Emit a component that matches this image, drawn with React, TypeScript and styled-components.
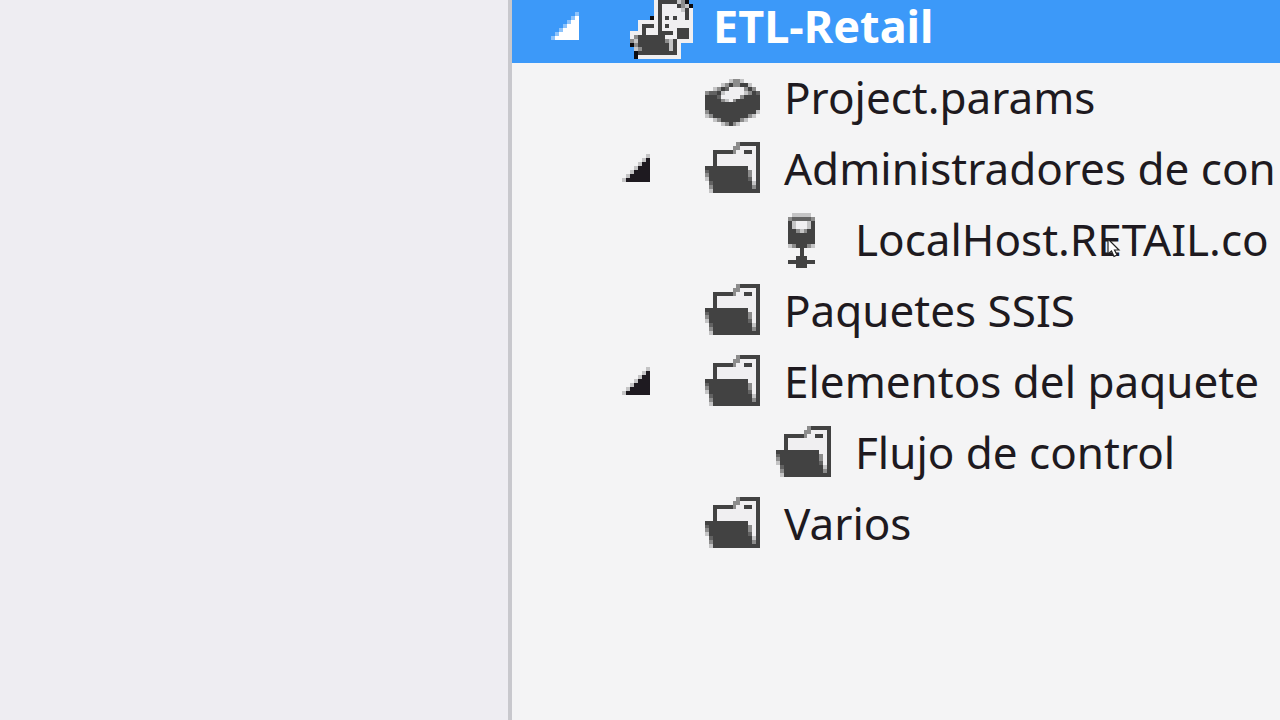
import React from 'react';
import styled, { createGlobalStyle } from 'styled-components';

const GlobalStyle = createGlobalStyle`
  * { box-sizing: border-box; }
  body { margin: 0; background: #f4f4f5; }
`;

const Shell = styled.div`
  display: grid;
  grid-template-columns: 2fr 3fr;
  height: 100vh;
  overflow: hidden;
`;

const Workspace = styled.section`
  background: #eeedf2;
  border-right: 4px solid #c8c8cd;
`;

const Explorer = styled.aside`
  min-width: 0;
  overflow: hidden;
  background: #f4f4f5;
`;

const Tree = styled.ul`
  list-style: none;
  margin: -8px 0 0;
  padding: 0;
`;

const Row = styled.li<{ $level: number; $selected?: boolean }>`
  display: flex;
  align-items: center;
  height: 71px;
  padding-left: ${p => 39 + p.$level * 71}px;
  background: ${p => (p.$selected ? '#3c99f9' : 'transparent')};
  color: ${p => (p.$selected ? '#ffffff' : '#1e1a20')};
  font-size: ${p => (p.$selected ? 45 : 44)}px;
  font-weight: ${p => (p.$selected ? 700 : 400)};
`;

const Toggle = styled.button`
  display: flex;
  flex: none;
  width: 28px;
  margin-right: 51px;
  padding: 0 0 4px;
  border: 0;
  background: none;
  color: inherit;
`;

const ToggleSpace = styled.span`
  flex: none;
  width: 79px;
`;

const IconBox = styled.span`
  display: flex;
  flex: none;
  width: 64px;
  margin-right: 19px;
`;

const Label = styled.span`
  position: relative;
  padding-bottom: 4px;
  font-family: 'Noto Sans', 'Open Sans', sans-serif;
  line-height: 50px;
  white-space: nowrap;
`;

const Pointer = styled.svg`
  position: absolute;
  left: 252px;
  top: 24px;
`;

const palette: Record<string, string> = {
  D: '#424242',
  d: '#626262',
  g: '#8c8c8c',
  l: '#c4c4c5',
  w: '#f0eff1',
  k: '#0c0c10',
  c: 'currentColor',
  h: '#8dc3fb',
};

const folder = [
  '',
  '.........gDDDDD.',
  '........ggwwwwD.',
  '...DDDDDgwwDDwD.',
  '...DwwwwwwwwwwD.',
  '...DwwwwwwwwwwD.',
  '...DwwwwwwwwwwD.',
  '.DDDDDDDDDDDwwD.',
  '.dDDDDDDDDDDgwD.',
  '.gDDDDDDDDDDgwD.',
  '.lDDDDDDDDDDdwD.',
  '..dDDDDDDDDDDlD.',
  '..gDDDDDDDDDDgD.',
  '..lDDDDDDDDDDDD.',
];

const params = [
  '',
  '',
  '',
  '.......lggl.....',
  '.....lgDggDDl...',
  '...lgDdwwwwgDg..',
  '.gddDlwwwwwlgDd.',
  '.DDDdwwwwwgDDDD.',
  '.DDDDglwgDDDDDD.',
  '.DDDDDDDDDDDDDD.',
  '.DDDDDDDDDDDDDD.',
  '.gDDDDDDDDDDDDl.',
  '.lgDDDDDDDDDgl..',
  '...lgDDDDDgl....',
  '.....lgDgl......',
];

const connection = [
  '',
  '.....lllll......',
  '....gdddddg.....',
  '....DlwwwlD.....',
  '....DlwwwlD.....',
  '....DDglgDD.....',
  '....DDDDDDD.....',
  '....DDDDDDD.....',
  '....DDDDDDD.....',
  '....lgDDDgl.....',
  '.......D........',
  '.......D........',
  '......DDD.......',
  '....DDDDDDD.....',
  '......DDD.......',
];

const project = [
  '......wwwwwwww..',
  '......wDDDDDlgk.',
  '......wDwwwwDglk',
  '......wDwwwwwlDw',
  '......wDwwwwwwDw',
  '.....kwDwDwDwwDw',
  '..wwwwwDwwwwwwww',
  '..wDDDwDwDwwwwww',
  '..wDwwwDwwwwDDDw',
  'wwwDwwwDDDDwDDDw',
  'wgDDDDDDDwwwDDDw',
  'glDDDDDDDglDwwww',
  'kgDDDDDDDDlDw...',
  '.lgDDDDDDDlDw...',
  '.kDDDDDDDDDDw...',
  '.kwwwwwwwwwww...',
];

const arrow = ['......l', '.....lc', '....lcc', '...lccc', '..lcccc', '.lccccc', 'lcccccc'];
const selectedArrow = arrow.map(line => line.replace('l', 'h'));

function toRuns(line: string) {
  return Array.from(line.matchAll(/([^.])\1*/g), m => ({ x: m.index ?? 0, width: m[0].length, tone: m[1] }));
}

function PixelIcon({ map, cells, size }: { map: string[]; cells: number; size: number }) {
  return (
    <svg width={size} height={size} viewBox={`0 0 ${cells} ${cells}`} shapeRendering="crispEdges" aria-hidden="true">
      {map.map((line, y) =>
        toRuns(line).map(({ x, width, tone }) => (
          <rect key={`${x}-${y}`} x={x} y={y} width={width} height={1} fill={palette[tone]} />
        )),
      )}
    </svg>
  );
}

type TreeNode = { label: string; level: number; icon: string[]; open?: boolean; selected?: boolean; pointer?: boolean };

const nodes: TreeNode[] = [
  { label: 'ETL-Retail', level: 0, icon: project, open: true, selected: true },
  { label: 'Project.params', level: 1, icon: params },
  { label: 'Administradores de con', level: 1, icon: folder, open: true },
  { label: 'LocalHost.RETAIL.co', level: 2, icon: connection, pointer: true },
  { label: 'Paquetes SSIS', level: 1, icon: folder },
  { label: 'Elementos del paquete', level: 1, icon: folder, open: true },
  { label: 'Flujo de control', level: 2, icon: folder },
  { label: 'Varios', level: 1, icon: folder },
];

export default function App() {
  return (
    <>
      <GlobalStyle />
      <Shell>
        <Workspace />
        <Explorer>
          <Tree role="tree">
            {nodes.map(node => (
              <Row
                key={node.label}
                role="treeitem"
                aria-level={node.level + 1}
                aria-selected={!!node.selected}
                aria-expanded={node.open}
                $level={node.level}
                $selected={node.selected}
              >
                {node.open ? (
                  <Toggle type="button" aria-label={node.label}>
                    <PixelIcon map={node.selected ? selectedArrow : arrow} cells={7} size={28} />
                  </Toggle>
                ) : (
                  <ToggleSpace />
                )}
                <IconBox>
                  <PixelIcon map={node.icon} cells={16} size={63} />
                </IconBox>
                <Label>
                  {node.label}
                  {node.pointer && (
                    <Pointer width="14" height="20" viewBox="0 0 14 20" aria-hidden="true">
                      <path d="M1 1V16L4.500 13L7 18.500L10 17L7.500 12H12Z" fill="#fff" stroke="#222" strokeWidth="1.200" />
                    </Pointer>
                  )}
                </Label>
              </Row>
            ))}
          </Tree>
        </Explorer>
      </Shell>
    </>
  );
}
